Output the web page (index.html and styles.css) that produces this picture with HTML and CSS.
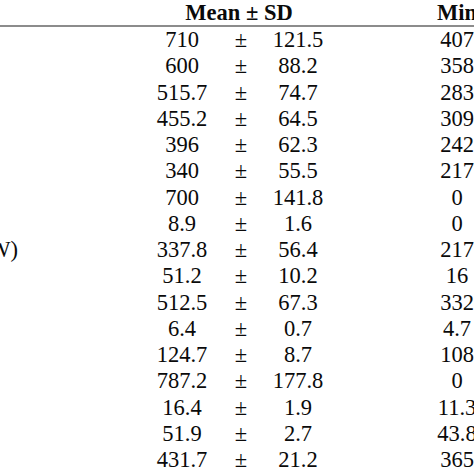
FILE: index.html
```html
<!DOCTYPE html>
<html>
<head>
<meta charset="utf-8">
<link rel="stylesheet" href="styles.css">
</head>
<body>
<div class="frame">
<table class="stats">
  <colgroup>
    <col class="c-label"><col class="c-mean"><col class="c-pm"><col class="c-sd"><col class="c-gap"><col class="c-min">
  </colgroup>
  <thead>
    <tr><th></th><th colspan="3">Mean ± SD</th><th></th><th>Min</th></tr>
  </thead>
  <tbody>
    <tr><td></td><td>710</td><td>±</td><td>121.5</td><td></td><td>407</td></tr>
    <tr><td></td><td>600</td><td>±</td><td>88.2</td><td></td><td>358</td></tr>
    <tr><td></td><td>515.7</td><td>±</td><td>74.7</td><td></td><td>283</td></tr>
    <tr><td></td><td>455.2</td><td>±</td><td>64.5</td><td></td><td>309</td></tr>
    <tr><td></td><td>396</td><td>±</td><td>62.3</td><td></td><td>242</td></tr>
    <tr><td></td><td>340</td><td>±</td><td>55.5</td><td></td><td>217</td></tr>
    <tr><td></td><td>700</td><td>±</td><td>141.8</td><td></td><td>0</td></tr>
    <tr><td></td><td>8.9</td><td>±</td><td>1.6</td><td></td><td>0</td></tr>
    <tr><td class="label"><span>Power (W)</span></td><td>337.8</td><td>±</td><td>56.4</td><td></td><td>217</td></tr>
    <tr><td></td><td>51.2</td><td>±</td><td>10.2</td><td></td><td>16</td></tr>
    <tr><td></td><td>512.5</td><td>±</td><td>67.3</td><td></td><td>332</td></tr>
    <tr><td></td><td>6.4</td><td>±</td><td>0.7</td><td></td><td>4.7</td></tr>
    <tr><td></td><td>124.7</td><td>±</td><td>8.7</td><td></td><td>108</td></tr>
    <tr><td></td><td>787.2</td><td>±</td><td>177.8</td><td></td><td>0</td></tr>
    <tr><td></td><td>16.4</td><td>±</td><td>1.9</td><td></td><td>11.3</td></tr>
    <tr><td></td><td>51.9</td><td>±</td><td>2.7</td><td></td><td>43.8</td></tr>
    <tr><td></td><td>431.7</td><td>±</td><td>21.2</td><td></td><td>365</td></tr>
  </tbody>
</table>
</div>
</body>
</html>
```
FILE: styles.css
```css
html, body {
  margin: 0;
  padding: 0;
  background: #ffffff;
  overflow: hidden;
}
.frame {
  width: 474px;
  height: 474px;
  overflow: hidden;
}
.stats {
  border-collapse: collapse;
  table-layout: fixed;
  width: 498px;
  margin-left: -2px;
  font-family: "Liberation Serif", "Times New Roman", serif;
  font-size: 22.5px;
  color: #0a0a0a;
}
.c-label { width: 142px; }
.c-mean { width: 84px; }
.c-pm { width: 34px; }
.c-sd { width: 80px; }
.c-gap { width: 80px; }
.c-min { width: 78px; }
.stats th {
  font-weight: bold;
  text-align: center;
  padding: 1px 0 0 0;
  line-height: 24px;
  height: 24px;
  white-space: nowrap;
  border-bottom: 2px solid #8c8c8c;
}
.stats td {
  text-align: center;
  padding: 0;
  line-height: 26.25px;
  white-space: nowrap;
}
.stats td.label {
  direction: rtl;
  text-align: right;
  overflow: hidden;
  padding-right: 122px;
}
.stats td.label span {
  direction: ltr;
  unicode-bidi: isolate;
  display: inline-block;
}
```
